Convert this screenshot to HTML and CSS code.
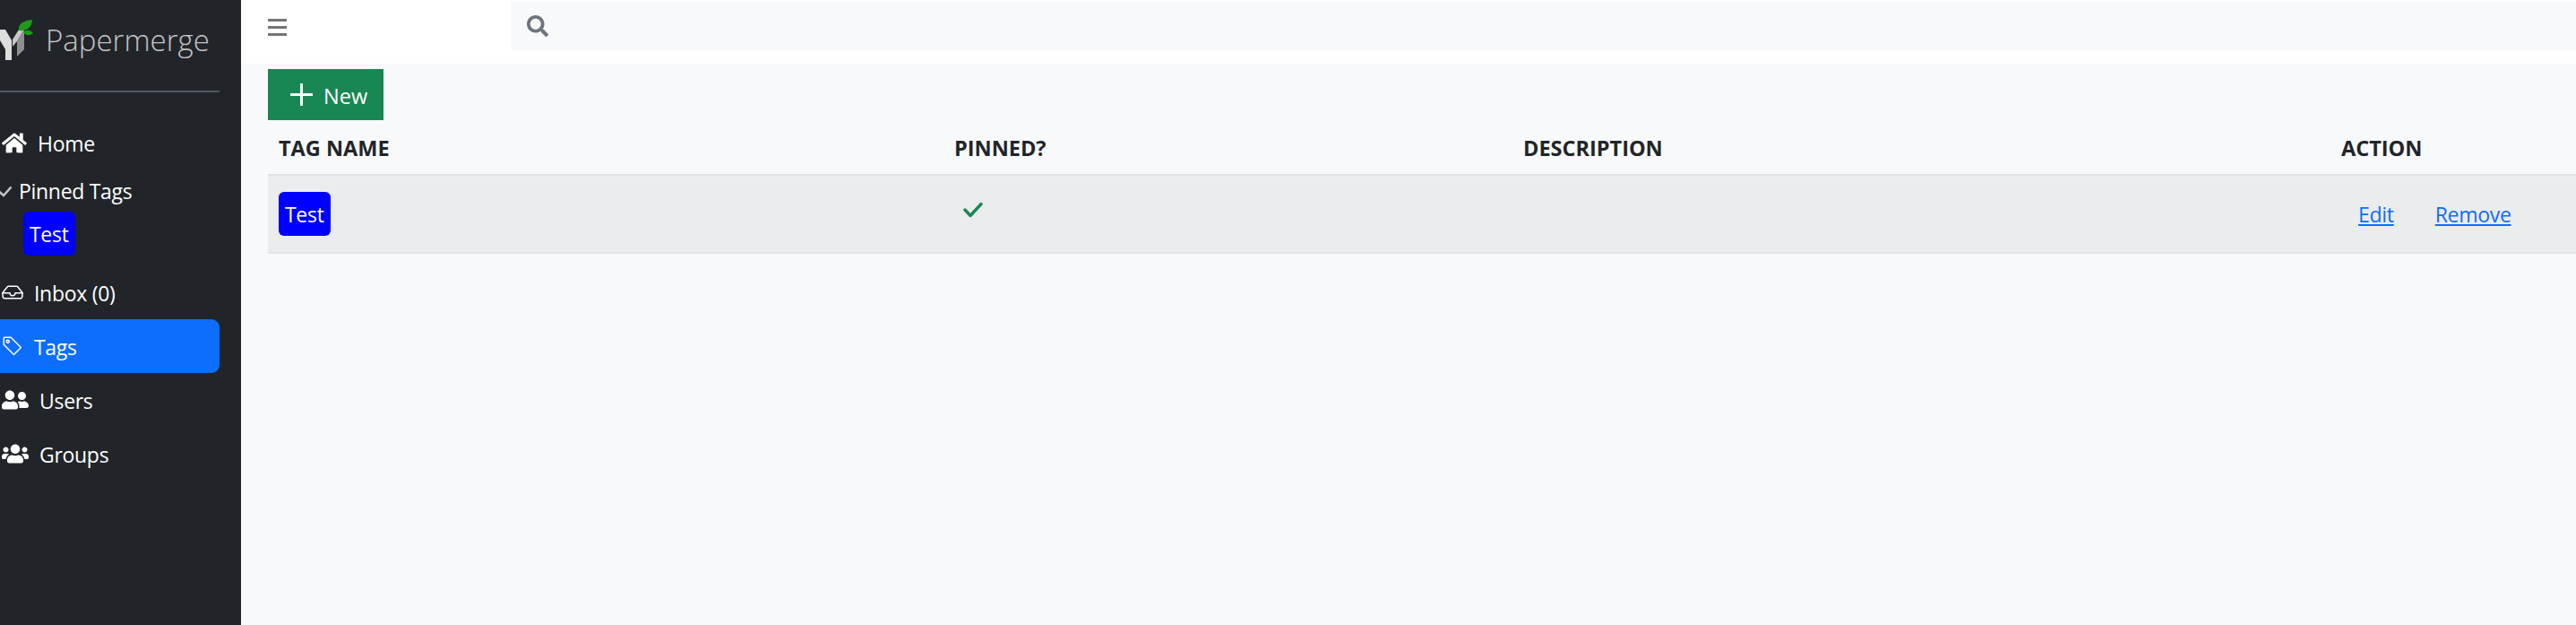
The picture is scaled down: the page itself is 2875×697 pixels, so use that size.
FILE: index.html
```html
<!DOCTYPE html>
<html lang="en">
<head>
  <meta charset="UTF-8" />
  <title>Papermerge</title>
  <link rel="stylesheet" href="styles.css">
</head>
<body>
  <div class="app">
    <aside class="sidebar">
      <div class="brand">
        <svg class="logo" viewBox="0 0 40 70" width="40" height="70">
          <polygon points="0,33 6,33 13,45 13,67 6,67 6,55 0,45" fill="#dedede"/>
          <polygon points="14,44 21,33 27,33 19,46 14,52" fill="#c8c8c8"/>
          <polygon points="19,46 27,33 27,55 19,63" fill="#8f8f8f"/>
          <path d="M21 34C20 27 25 23 36 22C36 30 30 35 21 34Z" fill="#1f9a1a"/>
          <path d="M26 36C30 33 33 33 37 37C33 40 29 40 26 36Z" fill="#18a012"/>
        </svg>
        <span class="brand-name">Papermerge</span>
      </div>
      <nav class="menu">
        <a class="menu-item" href="#">
          <svg class="icon-home" viewBox="0 0 576 512"><path fill="currentColor" d="M280.37 148.26L96 300.11V464a16 16 0 0 0 16 16l112.06-.29a16 16 0 0 0 15.92-16V368a16 16 0 0 1 16-16h64a16 16 0 0 1 16 16v95.64a16 16 0 0 0 16 16.05L464 480a16 16 0 0 0 16-16V300L295.67 148.26a12.19 12.19 0 0 0-15.3 0zM571.6 251.47L488 182.56V44.05a12 12 0 0 0-12-12h-56a12 12 0 0 0-12 12v72.61L318.47 43a48 48 0 0 0-61 0L4.34 251.47a12 12 0 0 0-1.6 16.9l25.5 31A12 12 0 0 0 45.15 301l235.22-193.74a12.19 12.19 0 0 1 15.3 0L530.9 301a12 12 0 0 0 16.9-1.6l25.5-31a12 12 0 0 0-1.7-16.93z"/></svg>
          <span>Home</span>
        </a>
        <div class="pinned">
          <div class="pinned-title">
            <svg class="icon-pin" viewBox="0 0 14 14"><polyline points="-1,7.5 4,12 12.5,2.5" fill="none" stroke="#c4c4c4" stroke-width="2.6"/></svg>
            <span>Pinned Tags</span>
          </div>
          <span class="tag tag-side">Test</span>
        </div>
        <a class="menu-item" href="#">
          <svg class="icon-outline" viewBox="0 0 16 16"><path fill="currentColor" d="M4.98 4a.5.5 0 0 0-.39.188L1.54 8H6a.5.5 0 0 1 .5.5 1.5 1.5 0 1 0 3 0A.5.5 0 0 1 10 8h4.46l-3.05-3.812A.5.5 0 0 0 11.02 4H4.98zm9.954 5H10.45a2.5 2.5 0 0 1-4.9 0H1.066l.32 2.562a.5.5 0 0 0 .497.438h12.234a.5.5 0 0 0 .496-.438L14.933 9zM3.809 3.563A1.5 1.5 0 0 1 4.981 3h6.038a1.5 1.5 0 0 1 1.172.563l3.7 4.625a.5.5 0 0 1 .105.374l-.39 3.124A1.5 1.5 0 0 1 14.117 13H1.883a1.5 1.5 0 0 1-1.489-1.314l-.39-3.124a.5.5 0 0 1 .106-.374l3.7-4.625z"/></svg>
          <span>Inbox (0)</span>
        </a>
        <a class="menu-item active" href="#">
          <svg class="icon-outline" viewBox="0 0 16 16"><path fill="currentColor" d="M6 4.5a1.5 1.5 0 1 1-3 0 1.5 1.5 0 0 1 3 0zm-1 0a.5.5 0 1 0-1 0 .5.5 0 0 0 1 0z"/><path fill="currentColor" d="M2 1h4.586a1 1 0 0 1 .707.293l7 7a1 1 0 0 1 0 1.414l-4.586 4.586a1 1 0 0 1-1.414 0l-7-7A1 1 0 0 1 1 6.586V2a1 1 0 0 1 1-1zm0 5.586 7 7L13.586 9l-7-7H2v4.586z"/></svg>
          <span>Tags</span>
        </a>
        <a class="menu-item" href="#">
          <svg class="icon-people" viewBox="0 0 640 512"><path fill="currentColor" d="M192 256c61.9 0 112-50.1 112-112S253.9 32 192 32 80 82.1 80 144s50.1 112 112 112zm76.8 32h-8.3c-20.8 10-43.9 16-68.5 16s-47.6-6-68.5-16h-8.3C51.6 288 0 339.6 0 403.2V432c0 26.5 21.5 48 48 48h288c26.5 0 48-21.5 48-48v-28.8c0-63.6-51.6-115.2-115.2-115.2zM480 256c53 0 96-43 96-96s-43-96-96-96-96 43-96 96 43 96 96 96zm48 32h-3.8c-13.9 4.8-28.6 8-44.2 8s-30.3-3.2-44.2-8H432c-20.4 0-39.2 5.9-55.7 15.4 24.4 26.3 39.7 61.2 39.7 99.8v38.4c0 2.2-.5 4.3-.6 6.4H592c26.5 0 48-21.5 48-48 0-61.9-50.1-112-112-112z"/></svg>
          <span>Users</span>
        </a>
        <a class="menu-item" href="#">
          <svg class="icon-people" viewBox="0 0 640 512"><path fill="currentColor" d="M96 224c35.3 0 64-28.7 64-64s-28.7-64-64-64-64 28.7-64 64 28.7 64 64 64zm448 0c35.3 0 64-28.7 64-64s-28.7-64-64-64-64 28.7-64 64 28.7 64 64 64zm32 32h-64c-17.6 0-33.5 7.1-45.1 18.6 40.3 22.1 68.9 62 75.1 109.4h66c17.7 0 32-14.3 32-32v-32c0-35.3-28.7-64-64-64zm-256 0c61.9 0 112-50.1 112-112S381.9 32 320 32 208 82.1 208 144s50.1 112 112 112zm76.8 32h-8.3c-20.8 10-43.9 16-68.5 16s-47.6-6-68.5-16h-8.3C179.6 288 128 339.6 128 403.2V432c0 26.5 21.5 48 48 48h288c26.5 0 48-21.5 48-48v-28.8c0-63.6-51.6-115.2-115.2-115.2zm-223.7-13.4C161.5 263.1 145.6 256 128 256H64c-35.3 0-64 28.7-64 64v32c0 17.7 14.3 32 32 32h65.9c6.3-47.4 34.9-87.3 75.2-109.4z"/></svg>
          <span>Groups</span>
        </a>
      </nav>
    </aside>

    <div class="content">
      <header class="topbar">
        <button class="toggle" aria-label="Toggle sidebar">
          <span></span><span></span><span></span>
        </button>
        <div class="search">
          <svg class="icon-search" viewBox="0 0 512 512"><path fill="currentColor" d="M505 442.7L405.3 343c-4.5-4.5-10.6-7-17-7H372c27.6-35.3 44-79.7 44-128C416 93.1 322.9 0 208 0S0 93.1 0 208s93.1 208 208 208c48.3 0 92.7-16.4 128-44v16.3c0 6.4 2.5 12.5 7 17l99.7 99.7c9.4 9.4 24.6 9.4 33.9 0l28.3-28.3c9.4-9.4 9.4-24.6.1-34zM208 336c-70.7 0-128-57.2-128-128 0-70.7 57.2-128 128-128 70.7 0 128 57.2 128 128 0 70.7-57.2 128-128 128z"/></svg>
        </div>
      </header>

      <main class="main">
        <button class="btn-new">
          <svg class="icon-plus" viewBox="0 0 25 25"><path d="M12.5 1v23M1 12.5h23" fill="none" stroke="#fff" stroke-width="3" stroke-linecap="round"/></svg>
          <span>New</span>
        </button>

        <table class="tags-table">
          <colgroup>
            <col class="col-name">
            <col class="col-pinned">
            <col class="col-desc">
            <col class="col-action">
          </colgroup>
          <thead>
            <tr>
              <th>Tag name</th>
              <th>Pinned?</th>
              <th>Description</th>
              <th>Action</th>
            </tr>
          </thead>
          <tbody>
            <tr>
              <td><span class="tag">Test</span></td>
              <td class="cell-check">
                <svg class="icon-check" viewBox="0 0 22 18"><polyline points="2,9 8,15.5 20,2.5" fill="none" stroke="#198754" stroke-width="3.4" stroke-linecap="round" stroke-linejoin="round"/></svg>
              </td>
              <td></td>
              <td class="cell-actions"><a href="#">Edit</a><a href="#">Remove</a></td>
            </tr>
          </tbody>
        </table>
      </main>
    </div>
  </div>
</body>
</html>
```

FILE: styles.css
```css
html, body {
  margin: 0;
  padding: 0;
  height: 100%;
  overflow: hidden;
}
body {
  font-family: "Open Sans", "Noto Sans", sans-serif;
  font-size: 23px;
  letter-spacing: -0.3px;
  color: #212529;
  background-color: #f8f9fa;
}
.app {
  display: flex;
  height: 100%;
}

/* sidebar */
.sidebar {
  width: 269px;
  flex: none;
  background-color: #212529;
  color: #fff;
  overflow: hidden;
}
.brand {
  display: flex;
  align-items: flex-start;
  width: 245px;
  height: 101px;
  border-bottom: 2px solid #4f5962;
}
.logo {
  flex: none;
  margin-right: 11px;
}
.brand-name {
  margin-top: 23px;
  font-size: 33px;
  font-weight: 300;
  letter-spacing: 0;
  color: #c4c4c4;
  line-height: 44px;
}
.menu {
  width: 245px;
  padding-top: 26px;
}
.menu-item {
  display: flex;
  align-items: center;
  height: 60px;
  color: #fff;
  text-decoration: none;
  border-radius: 0 9px 9px 0;
}
.menu-item span {
  padding-top: 2px;
}
.menu-item.active {
  background-color: #0d6efd;
}
.icon-home {
  width: 28px;
  height: 25px;
  margin: 0 12px 0 2px;
}
.icon-outline {
  width: 24px;
  height: 24px;
  margin: 0 12px 0 2px;
}
.icon-people {
  width: 30px;
  height: 24px;
  margin: 0 12px 0 2px;
}
.pinned {
  height: 107px;
}
.pinned-title {
  display: flex;
  align-items: center;
  height: 46px;
  padding-top: 1px;
}
.icon-pin {
  width: 14px;
  height: 14px;
  margin-right: 7px;
}
.tag {
  display: inline-block;
  padding: 0 7px;
  line-height: 50px;
  height: 49px;
  background-color: #0000ff;
  color: #fff;
  border-radius: 6px;
}
.tag-side {
  margin-left: 26px;
}

/* top bar */
.content {
  flex: 1;
  min-width: 0;
  display: flex;
  flex-direction: column;
}
.topbar {
  display: flex;
  height: 71px;
  flex: none;
  background-color: #fff;
}
.toggle {
  width: 301px;
  height: 71px;
  padding: 21px 0 0 30px;
  flex: none;
  border: none;
  background: none;
  display: flex;
  flex-direction: column;
  gap: 5px;
}
.toggle span {
  display: block;
  width: 21px;
  height: 3px;
  background-color: #757575;
}
.search {
  flex: 1;
  height: 54px;
  margin-top: 2px;
  background-color: #f8f9fa;
  display: flex;
  align-items: center;
  padding-left: 18px;
}
.icon-search {
  width: 24px;
  height: 24px;
  color: #6c757d;
}

/* main area */
.main {
  flex: 1;
  padding: 6px 0 0 30px;
  background-color: #f8f9fa;
}
.btn-new {
  display: flex;
  align-items: center;
  width: 129px;
  height: 57px;
  padding: 2px 0 0 25px;
  border: none;
  background-color: #198754;
  color: #fff;
  font-family: inherit;
  font-size: 23.5px;
}
.icon-plus {
  width: 25px;
  height: 25px;
  margin: -2px 12px 0 0;
}
.tags-table {
  width: 100%;
  table-layout: fixed;
  border-collapse: collapse;
}
.col-name { width: 754px; }
.col-pinned { width: 635px; }
.col-desc { width: 913px; }
.col-action { width: 274px; }
.tags-table th {
  height: 58px;
  padding: 2px 12px 0;
  text-align: left;
  text-transform: uppercase;
  font-size: 23.5px;
  font-weight: 700;
  letter-spacing: 0;
  border-bottom: 2px solid #dee2e6;
}
.tags-table td {
  height: 85px;
  padding: 0 12px;
  background-color: #ebecee;
  border-bottom: 2px solid #e2e3e5;
}
.cell-check {
  vertical-align: top;
}
.icon-check {
  display: block;
  width: 22px;
  height: 18px;
  margin: 29px 0 0 10px;
}
.cell-actions a {
  color: #0d6efd;
  margin-left: 19px;
}
.cell-actions a + a {
  margin-left: 46px;
}
```
